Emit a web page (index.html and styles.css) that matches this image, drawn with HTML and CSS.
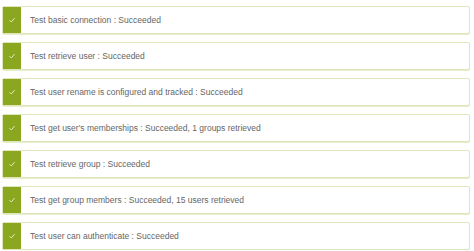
FILE: index.html
```html
<!DOCTYPE html>
<html lang="en">
<head>
    <meta charset="UTF-8">
    <title>Connection tests</title>
    <link rel="stylesheet" href="styles.css">
</head>
<body>
    <div class="lista">
        <div class="teste">
            <div class="ok"><svg viewBox="0 0 10 10"><path d="M2.5 5.2 L4.3 7 L7.6 3"/></svg></div>
            <span class="msg">Test basic connection : Succeeded</span>
        </div>
        <div class="teste">
            <div class="ok"><svg viewBox="0 0 10 10"><path d="M2.5 5.2 L4.3 7 L7.6 3"/></svg></div>
            <span class="msg">Test retrieve user : Succeeded</span>
        </div>
        <div class="teste">
            <div class="ok"><svg viewBox="0 0 10 10"><path d="M2.5 5.2 L4.3 7 L7.6 3"/></svg></div>
            <span class="msg">Test user rename is configured and tracked : Succeeded</span>
        </div>
        <div class="teste">
            <div class="ok"><svg viewBox="0 0 10 10"><path d="M2.5 5.2 L4.3 7 L7.6 3"/></svg></div>
            <span class="msg">Test get user's memberships : Succeeded, 1 groups retrieved</span>
        </div>
        <div class="teste">
            <div class="ok"><svg viewBox="0 0 10 10"><path d="M2.5 5.2 L4.3 7 L7.6 3"/></svg></div>
            <span class="msg">Test retrieve group : Succeeded</span>
        </div>
        <div class="teste">
            <div class="ok"><svg viewBox="0 0 10 10"><path d="M2.5 5.2 L4.3 7 L7.6 3"/></svg></div>
            <span class="msg">Test get group members : Succeeded, 15 users retrieved</span>
        </div>
        <div class="teste">
            <div class="ok"><svg viewBox="0 0 10 10"><path d="M2.5 5.2 L4.3 7 L7.6 3"/></svg></div>
            <span class="msg">Test user can authenticate : Succeeded</span>
        </div>
    </div>
</body>
</html>
```
FILE: styles.css
```css
body { margin: 0; background: #fff; font-family: "Liberation Sans", Arial, sans-serif; }
.lista { display: flex; flex-direction: column; gap: 8px; padding: 6px 4px 0 2px; }
.teste { display: flex; align-items: stretch; height: 28px; box-sizing: border-box; border: 1px solid #dfe5bd; border-radius: 2px; box-shadow: 0 1px 0 #e6edc9; background: #fff; }
.ok { width: 18px; background: #8ba61f; display: flex; align-items: center; justify-content: center; }
.ok svg { width: 10px; height: 10px; fill: none; stroke: #e8f0c8; stroke-width: 0.9; }
.msg { display: flex; align-items: center; margin-left: 9px; font-size: 8.5px; color: #666; }
```
